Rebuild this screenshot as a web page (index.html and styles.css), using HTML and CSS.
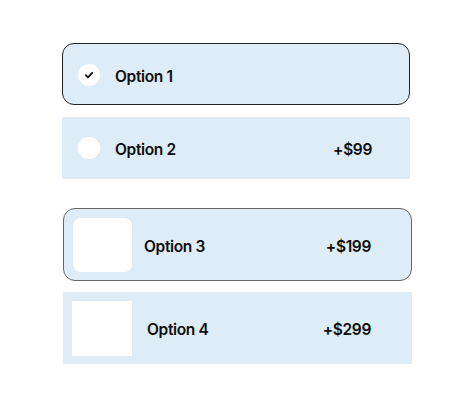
FILE: index.html
```html
<!doctype html>
<html>

<head>
	<meta charset="utf-8">
	<title>Options</title>
	<link rel="stylesheet" href="styles.css">
</head>

<body>
	<div class="group group-radio">
		<div class="option selected">
			<span class="radio">
				<svg width="10" height="10" viewBox="0 0 10 10"><path d="M1.8 5.2 L4 7.3 L8.2 2.8" fill="none" stroke="#111" stroke-width="1.8" stroke-linecap="round" stroke-linejoin="round"/></svg>
			</span>
			<span class="label">Option 1</span>
		</div>
		<div class="option">
			<span class="radio"></span>
			<span class="label">Option 2</span>
			<span class="price">+$99</span>
		</div>
	</div>

	<div class="group group-thumb">
		<div class="option tall selected">
			<span class="thumb round"></span>
			<span class="label">Option 3</span>
			<span class="price">+$199</span>
		</div>
		<div class="option tall">
			<span class="thumb"></span>
			<span class="label label-wide">Option 4</span>
			<span class="price">+$299</span>
		</div>
	</div>
</body>

</html>
```

FILE: styles.css
```css
* {
	margin: 0;
	padding: 0;
	box-sizing: border-box;
}

body {
	background: #fff;
	font-family: Inter, "Liberation Sans", sans-serif;
	color: #0d0d0d;
	padding-top: 43px;
}

.group {
	display: flex;
	flex-direction: column;
	gap: 12px;
}

.group-radio {
	width: 348px;
	margin-left: 62px;
}

.group-thumb {
	width: 349px;
	margin-left: 63px;
	margin-top: 29px;
	gap: 11px;
}

.option {
	display: flex;
	align-items: center;
	height: 62px;
	background: #deecf7;
	padding: 0 38px 0 16px;
}

.option.selected {
	border: 1px solid #222;
	border-radius: 12px;
	padding-left: 15px;
	padding-top: 2px;
}

.option.tall {
	height: 72px;
	padding: 0 41px 0 9px;
}

.option.tall.selected {
	height: 73px;
	border-color: #666;
	padding-left: 9px;
	padding-right: 40px;
}

.radio {
	width: 22px;
	height: 22px;
	border-radius: 50%;
	background: #fff;
	display: flex;
	align-items: center;
	justify-content: center;
	margin-right: 15px;
	flex-shrink: 0;
}

.thumb {
	width: 60px;
	height: 55px;
	background: #fff;
	flex-shrink: 0;
	margin-right: 12px;
}

.thumb.round {
	width: 59px;
	height: 54px;
	border-radius: 8px;
}

.label,
.price {
	font-size: 15.5px;
	font-weight: 600;
	letter-spacing: -0.35px;
	padding-top: 3px;
}

.label-wide {
	margin-left: 3px;
}

.price {
	margin-left: auto;
}
```
